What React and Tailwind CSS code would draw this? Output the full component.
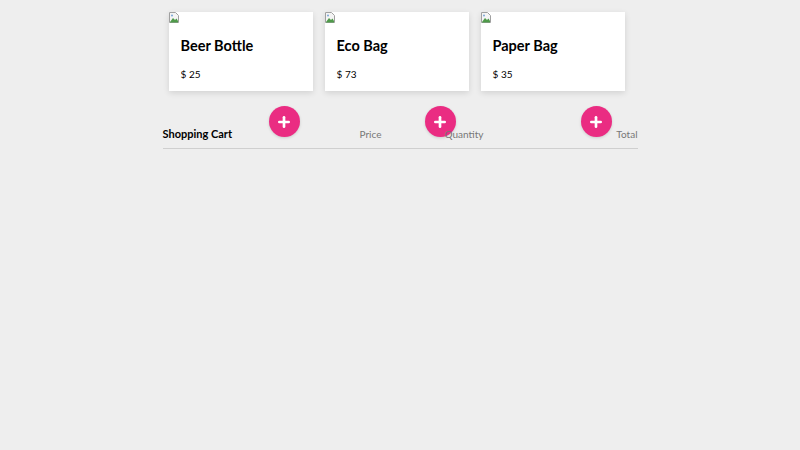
import { Plus } from "lucide-react";

const products = [
  { name: "Beer Bottle", price: 25 },
  { name: "Eco Bag", price: 73 },
  { name: "Paper Bag", price: 35 },
];

const BrokenImg = () => (
  <svg width="10" height="11" viewBox="0 0 10 11" className="block">
    <path d="M0.5 0.5h6l3 3v7h-9z" fill="#f4f4f4" stroke="#a0a0a0" />
    <path d="M1 10l3-4 2 2 1.5-1.5L9 9v1.5H1z" fill="#4f9a4a" />
    <circle cx="3" cy="3.5" r="1" fill="#7aa7d6" />
  </svg>
);

export default function App() {
  return (
    <div className="min-h-screen w-full bg-[#eeeeee] font-['Lato','Open_Sans',sans-serif]">
      <div className="w-[475px] mx-auto pt-3">
        <div className="flex gap-3 pl-[6px]">
          {products.map((p) => (
            <div key={p.name} className="w-[144px] flex flex-col items-end">
              <div className="w-full h-[79px] bg-white shadow-[0_2px_6px_rgba(0,0,0,0.12)]">
                <BrokenImg />
                <p className="pl-3 mt-[13px] text-[14.5px] leading-5 font-bold text-black">{p.name}</p>
                <p className="pl-3 mt-[12px] text-[10px] leading-3 text-black">$ {p.price}</p>
              </div>
              <button className="mt-[15px] mr-[13px] w-[31px] h-[31px] rounded-full bg-[#ea2c82] text-white flex items-center justify-center shadow-[0_1px_3px_rgba(0,0,0,0.15)]">
                <Plus size={16} strokeWidth={4} />
              </button>
            </div>
          ))}
        </div>
        <div className="-mt-[11px] flex items-end h-[15px] text-[11px] leading-[14px] border-b border-[#cfcfcf] pb-[7px] box-content">
          <span className="w-[197px] font-bold text-black">Shopping Cart</span>
          <span className="w-[85px] text-[10px] text-[#777]">Price</span>
          <span className="text-[10px] text-[#777]">Quantity</span>
          <span className="ml-auto text-[10px] text-[#777]">Total</span>
        </div>
      </div>
    </div>
  );
}
